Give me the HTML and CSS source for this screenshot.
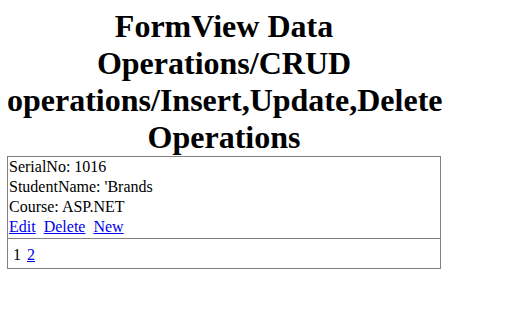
FILE: index.html
```html
<!DOCTYPE html>
<html lang="en">
<head>
  <meta charset="UTF-8" />
  <title>FormView Data Operations</title>
  <link rel="stylesheet" href="styles.css">
</head>
<body>
  <div class="page">
    <h1>FormView Data Operations/CRUD operations/Insert,Update,Delete Operations</h1>
    <table class="formview" cellspacing="0">
      <tr>
        <td class="item">
          <div>SerialNo: 1016</div>
          <div>StudentName: 'Brands</div>
          <div>Course: ASP.NET</div>
          <div><a href="#">Edit</a>&nbsp; <a href="#">Delete</a>&nbsp; <a href="#">New</a></div>
        </td>
      </tr>
      <tr>
        <td class="pager">
          <span>1</span>
          <a href="#">2</a>
        </td>
      </tr>
    </table>
  </div>
</body>
</html>
```

FILE: styles.css
```css
body {
  margin: 0;
  padding: 8px 7px;
  font-family: "Liberation Serif", "Times New Roman", serif;
  font-size: 16px;
  color: #000000;
  background-color: #FFFFFF;
}

.page {
  width: 434px;
}

h1 {
  margin: 0;
  font-size: 32px;
  font-weight: bold;
  text-align: center;
  line-height: 37px;
}

a {
  color: #0000EE;
}

.formview {
  width: 434px;
  border-collapse: collapse;
  border: 1px solid #808080;
}

.formview td {
  border: 1px solid #808080;
  padding: 0 1px;
}

.item {
  line-height: 20px;
  padding-bottom: 1px !important;
}

.pager {
  height: 27px;
  padding: 2px 5px 0 !important;
}

.pager span {
  margin-right: 2px;
}
```
